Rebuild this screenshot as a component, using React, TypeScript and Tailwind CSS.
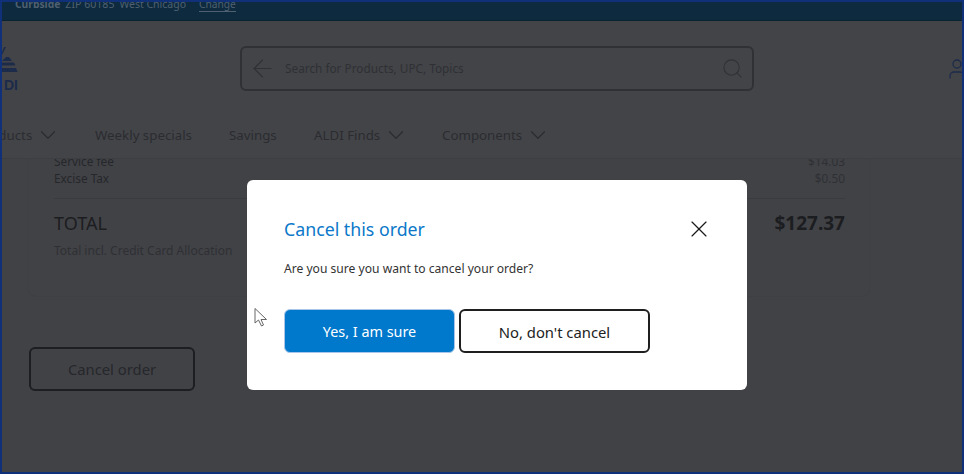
import { ArrowLeft, ChevronDown, Search, User, X } from "lucide-react"

const font = "font-['Noto_Sans','Open_Sans',sans-serif]"

function NavItem({ label, chevron, className }: { label: string; chevron?: boolean; className: string }) {
  return (
    <div className={`flex items-center h-5 text-[13.3px] leading-5 text-[#2b2c30] ${className}`}>
      <span>{label}</span>
      {chevron && <ChevronDown className="w-[26px] h-[26px] ml-[3px] -my-1" strokeWidth={1.1} />}
    </div>
  )
}

function AldiLogo() {
  return (
    <div className="w-[16px] h-[45px] overflow-hidden flex flex-col items-end">
      <svg width="16" height="27" viewBox="0 1 16 27" className="shrink-0">
        <path d="M2 2 L4 2 L0 10 L0 7 Z" fill="#1c2b4a" />
        <path d="M4 12 L7 12 L10 16 L0 16 Z" fill="#1c2b4a" />
        <path d="M0 17.5 L12 17.5 L13.5 20.5 L0 20.5 Z" fill="#1c2b4a" />
        <path d="M0 23 L14 23 L15.5 27 L0 27 Z" fill="#1c2b4a" />
      </svg>
      <span className="font-['Liberation_Sans',sans-serif] font-bold text-[14px] leading-[12px] mt-[6px] text-[#1c2b4a] whitespace-nowrap">DI</span>
    </div>
  )
}

export default function App() {
  return (
    <div className={`${font} relative w-[964px] h-[474px] overflow-hidden bg-[#414246] border-2 border-[#10307a]`}>
      {/* Top strip */}
      <div className="h-[20px] -mt-[1px] bg-[#0d2a3f] border-b border-[#0a2333] overflow-hidden pl-[13px] text-[11px] text-[#4f6070]">
        <div className="flex items-start leading-[14px] -mt-[4px] whitespace-nowrap">
          <span className="font-bold text-[10.3px]">Curbside</span>
          <span className="ml-[5px] text-[10.6px]">ZIP 60185</span>
          <span className="ml-[5px] text-[10.5px]">West Chicago</span>
          <span className="ml-[13px] text-[10.2px] border-b border-[#4f6070]">Change</span>
        </div>
      </div>

      {/* Header */}
      <header className="h-[138px] bg-[#434448] border-b border-[#3d3e42]">
        <div className="flex items-center pt-[25px]">
          <AldiLogo />
          <div className="ml-[222px] w-[514px] h-[45px] rounded-[6px] border-2 border-[#303135] flex items-center pl-[6px] pr-[8px]">
            <ArrowLeft className="w-[29px] h-[29px] text-[#303135]" strokeWidth={1} />
            <span className="ml-[8px] flex-1 text-[11.8px] text-[#2f3034]">Search for Products, UPC, Topics</span>
            <Search className="w-[23px] h-[23px] text-[#303135]" strokeWidth={1.1} />
          </div>
          <User className="ml-auto -mr-[7px] w-[24px] h-[24px] text-[#1c2b4a]" strokeWidth={1.3} />
        </div>
        <nav className="flex items-center mt-[34px] -ml-[25px]">
          <NavItem label="Products" chevron className="w-[118px]" />
          <NavItem label="Weekly specials" className="w-[134px]" />
          <NavItem label="Savings" className="w-[85px]" />
          <NavItem label="ALDI Finds" chevron className="w-[128px]" />
          <NavItem label="Components" chevron className="w-[120px]" />
        </nav>
      </header>

      {/* Order summary */}
      <main className="pl-[26px]">
        <section className="w-[842px] h-[138px] rounded-b-lg border border-t-0 border-[#3f4044] pl-[25px] pr-[24px] overflow-hidden">
          <div className="-mt-[6px] text-[11.8px] leading-[17px] text-[#26272b]">
            <div className="flex justify-between">
              <span>Service fee</span>
              <span className="text-[#2f3034]">$14.03</span>
            </div>
            <div className="flex justify-between">
              <span>Excise Tax</span>
              <span className="text-[#2f3034]">$0.50</span>
            </div>
          </div>
          <div className="mt-[11px] border-t border-[#3a3b3f] pt-[12px] flex justify-between">
            <div>
              <div className="text-[18px] leading-6 text-[#1c1d20]">TOTAL</div>
              <div className="mt-[7px] text-[12px] leading-[17px] text-[#2f3034]">Total incl. Credit Card Allocation</div>
            </div>
            <div className="text-[19px] leading-6 font-bold text-[#1c1d20]">$127.37</div>
          </div>
        </section>
        <button className="mt-[50px] ml-[1px] pt-[1px] w-[166px] h-[44px] rounded-[6px] border-2 border-[#1d1e21] text-[14.8px] text-[#26272b]">
          Cancel order
        </button>
      </main>

      {/* Dialog */}
      <div className="absolute left-[245px] top-[178px] w-[500px] h-[210px] bg-white rounded-[6px] pl-[37px] pr-[34px] pt-[36px]">
        <div className="flex items-center justify-between">
          <h2 className="text-[17.75px] leading-[26px] text-[#0b78c9]">Cancel this order</h2>
          <X className="w-[28px] h-[28px] -my-[1px] text-[#1a1a1a]" strokeWidth={1} />
        </div>
        <p className="mt-[18px] text-[12.1px] leading-[18px] text-[#333333]">Are you sure you want to cancel your order?</p>
        <div className="mt-[31px] flex gap-[4px]">
          <button className="w-[171px] h-[44px] pt-[2px] rounded-[6px] bg-[#0078cc] border border-[#a9c6e8] text-white text-[14.4px]">Yes, I am sure</button>
          <button className="w-[191px] h-[44px] pt-[2px] rounded-[6px] bg-white border-2 border-[#1f1f1f] text-[#222222] text-[14.8px]">No, don't cancel</button>
        </div>
      </div>

      {/* Mouse pointer */}
      <svg className="absolute left-[252px] top-[306px]" width="14" height="20" viewBox="0 0 14 20">
        <path d="M1 0.5 L1 15 L4.5 12 L7.5 18 L9.5 17 L7 11.5 L12.5 11.5 Z" fill="#ffffff" stroke="#666666" strokeWidth="1" />
      </svg>
    </div>
  )
}
